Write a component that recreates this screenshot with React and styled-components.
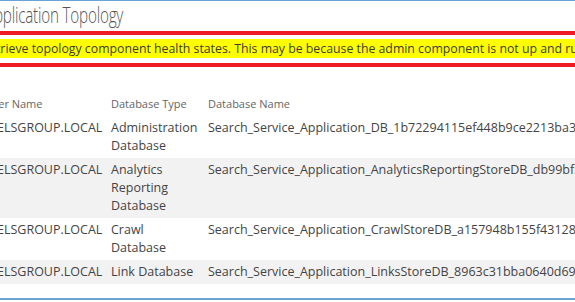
import React from 'react';
import styled,{createGlobalStyle} from 'styled-components';

const Global=createGlobalStyle`
html,body{margin:0;padding:0;background:#fff;}
body{font-family:"Open Sans","Liberation Sans",sans-serif;}
`;

const Page=styled.div`
width:575px;
height:300px;
box-sizing:border-box;
overflow:hidden;
border-top:1px solid #6aa3d8;
border-bottom:2px solid #6aa3d8;
`;

const Title=styled.h1`
margin:0 0 0 -15px;
height:30px;
font-weight:300;
font-size:21.5px;
letter-spacing:-0.3px;
line-height:28px;
color:#555;
white-space:nowrap;
transform:scaleX(0.71);
transform-origin:left center;
`;

const ErrorBand=styled.div`
border-top:4px solid #ed1c24;
border-bottom:4px solid #ed1c24;
height:24px;
padding-top:4px;
box-sizing:content-box;
overflow:hidden;
`;

const Highlight=styled.div`
background:#ffff00;
height:19px;
font-size:12.3px;
line-height:19px;
color:#3c3c3c;
white-space:nowrap;
text-indent:-75px;
`;

const Table=styled.div`
margin-top:24px;
display:grid;
grid-template-columns:111px 97px 1fr;
`;

const Head=styled.div`
height:25px;
font-size:11px;
line-height:25px;
color:#666;
white-space:nowrap;
overflow:hidden;
`;

const Cell=styled.div`
padding:3px ${p=>p.$wrap?'9px':'0'} 3px 0;
font-size:12.5px;
line-height:18px;
color:#444;
background:${p=>p.$alt?'#f3f2f3':'#fff'};
white-space:${p=>p.$wrap?'normal':'nowrap'};
overflow:hidden;
`;

const Clip=styled.span`
display:inline-block;
margin-left:${p=>p.$shift}px;
`;

const rows=[
  {type:'Administration Database',name:'Search_Service_Application_DB_1b72294115ef448b9ce2213ba37'},
  {type:'Analytics Reporting Database',name:'Search_Service_Application_AnalyticsReportingStoreDB_db99bf3'},
  {type:'Crawl Database',name:'Search_Service_Application_CrawlStoreDB_a157948b155f431281'},
  {type:'Link Database',name:'Search_Service_Application_LinksStoreDB_8963c31bba0640d697'},
];

export default function App(){
  return(
    <Page>
      <Global/>
      <Title>Application Topology</Title>
      <ErrorBand>
        <Highlight>Unable to retrieve topology component health states. This may be because the admin component is not up and running.</Highlight>
      </ErrorBand>
      <Table>
        <Head><Clip $shift={-24}>Server Name</Clip></Head>
        <Head>Database Type</Head>
        <Head>Database Name</Head>
        {rows.map((r,i)=>(
          <React.Fragment key={r.type}>
            <Cell $alt={i%2===1}><Clip $shift={-3}>ELSGROUP.LOCAL</Clip></Cell>
            <Cell $alt={i%2===1} $wrap>{r.type}</Cell>
            <Cell $alt={i%2===1}>{r.name}</Cell>
          </React.Fragment>
        ))}
      </Table>
    </Page>
  );
}
